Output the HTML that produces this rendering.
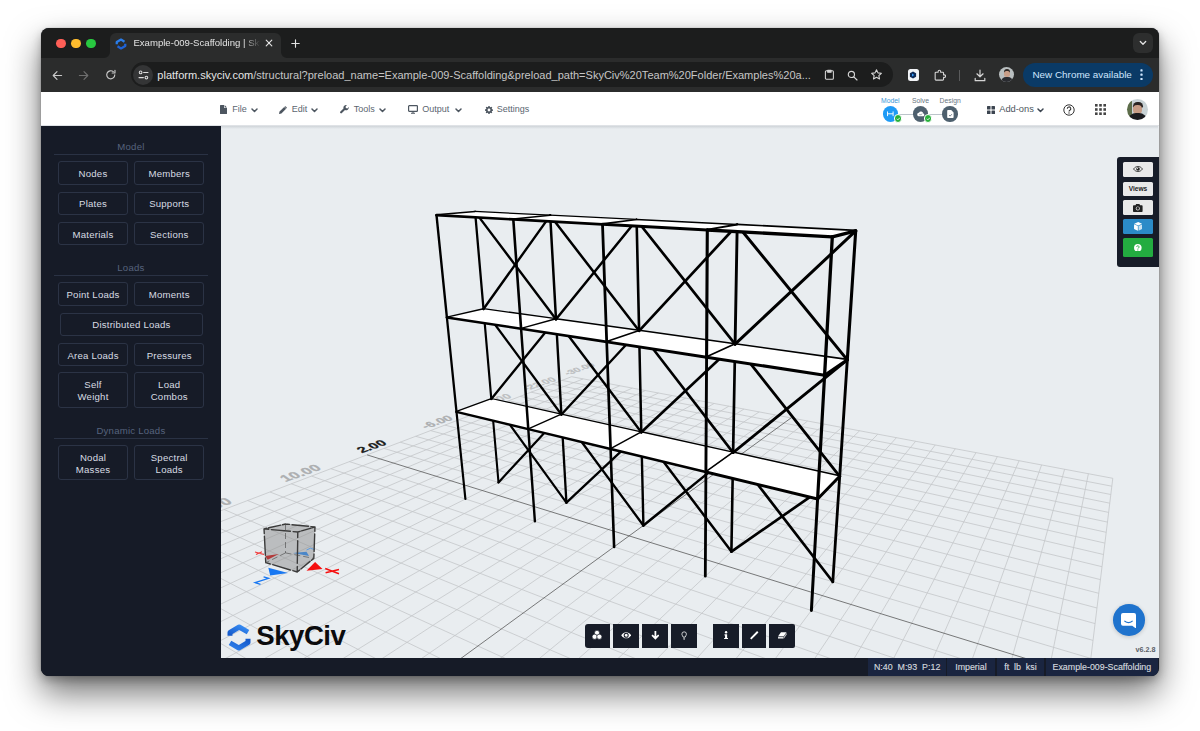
<!DOCTYPE html>
<html lang="en"><head><meta charset="utf-8"><title>Example-009-Scaffolding | SkyCiv</title>
<style>
*{box-sizing:border-box;margin:0;padding:0}
html,body{width:1200px;height:731px;overflow:hidden;background:#fff;font-family:"Liberation Sans",sans-serif}
.abs,.win *{position:absolute}
.shadow{position:absolute;left:41.2px;top:28px;width:1117.4px;height:647.6px;border-radius:8px;
 box-shadow:0 17px 34px 0 rgba(0,0,0,.55),0 4px 10px rgba(0,0,0,.25),0 0 1px rgba(0,0,0,.5)}
.win{position:absolute;left:41.2px;top:28px;width:1117.4px;height:647.6px;border-radius:8px;overflow:hidden;background:#161b27}
.win span,.win div{white-space:nowrap}
/* chrome */
.tabstrip{left:0;top:0;width:100%;height:30px;background:#1c1d1d}
.toolbar{left:0;top:29.5px;width:100%;height:34.5px;background:#2b2c2c}
.tab{left:68.5px;top:5px;width:171px;height:25px;background:#2b2c2c;border-radius:6px 6px 0 0}
.tl{width:9.2px;height:9.2px;border-radius:50%;top:10.9px}
.url{left:89.75px;top:34.3px;width:762px;height:25.2px;border-radius:12.6px;background:#1c1d1d}
.urltxt{left:26.4px;top:5.6px;font-size:11.02px;line-height:14px;color:#e6e6e6;letter-spacing:0}
.urltxt i{font-style:normal;color:#c6c6c6}
.ncp{left:982px;top:35px;width:130.2px;height:23.8px;border-radius:12px;background:#0a3a66}
.ncp span{left:9.3px;top:5.2px;font-size:9.88px;line-height:13px;color:#cfe6ff}
/* app */
.nav{left:0;top:64px;width:100%;height:33.5px;background:#fff;border-bottom:1px solid #dfe2e6}
.mi{top:12px;font-size:9px;line-height:11px;color:#5b6570}
.side{left:0;top:97.5px;width:179.8px;height:550px;background:#161b27}
.sh{left:0;width:179.5px;text-align:center;font-size:9.6px;letter-spacing:.22px;line-height:12px;color:#56637d;margin-top:.9px}
.sl{left:13px;width:153.5px;height:1px;background:#2a3244}
.sb{border:1px solid #2b3345;border-radius:3px;color:#d8dce3;font-size:9.6px;letter-spacing:.22px;line-height:12px;text-align:center;width:70.5px;height:23.6px;padding-top:5.9px}
.sb.c1{left:16.6px}.sb.c2{left:92.8px}
.sb.two{height:35.6px;padding-top:5.8px;white-space:normal!important}
.canvas{left:179.8px;top:97.5px;width:937.6px;height:532px;background:#e9edf0;overflow:hidden}
.status{left:0;top:629.5px;width:100%;height:18px;background:#161b27}
.sbx{top:0;height:18px;background:#1a2540;color:#d3d7de;font-size:8.85px;line-height:18px;text-align:center;-webkit-text-stroke:.15px #d3d7de}
.bb{top:526px;width:25.6px;height:24px;background:#171c28}
.rt{left:896.5px;top:31.5px;width:42px;height:110px;background:#171c28;border-radius:3px 0 0 3px}
.rb{left:5.5px;width:30px;height:14.8px;border-radius:1.5px;background:#e9e9e9}
</style></head><body>
<div class="shadow"></div>
<div class="win">
<div class="tabstrip"></div>
<div class="tab"></div>
<!-- tab curves -->
<svg style="left:62.5px;top:24px" width="6" height="6" viewBox="0 0 6 6"><path d="M6 0V6H0A6 6 0 0 0 6 0Z" fill="#2b2c2c"/></svg>
<svg style="left:239.5px;top:24px" width="6" height="6" viewBox="0 0 6 6"><path d="M0 0V6H6A6 6 0 0 1 0 0Z" fill="#2b2c2c"/></svg>
<div class="toolbar"></div>
<div class="tl" style="left:15.2px;background:#fe5f57"></div>
<div class="tl" style="left:30.2px;background:#febc2e"></div>
<div class="tl" style="left:45.2px;background:#28c840"></div>
<!-- favicon -->
<svg style="left:74px;top:9.5px" width="12" height="12" viewBox="0 0 24 24" fill="none" stroke="#2a7de9" stroke-width="4.6" stroke-linejoin="round"><path d="M3.5 12.5V8.2L12 3.2l7 4.1"/><path d="M20.5 11.5v4.3L12 20.8l-7-4.1" stroke="#1f63d6"/></svg>
<span style="left:92.2px;top:9px;font-size:9.6px;line-height:12px;color:#e3e3e3;width:129px;overflow:hidden;-webkit-mask-image:linear-gradient(90deg,#000 86%,transparent 99%);mask-image:linear-gradient(90deg,#000 86%,transparent 99%)">Example-009-Scaffolding | SkyCiv</span>
<svg style="left:223.7px;top:11.2px" width="8" height="8" viewBox="0 0 8 8" stroke="#e3e3e3" stroke-width="1.15" stroke-linecap="round"><path d="M1.2 1.2l5.6 5.6M6.8 1.2L1.2 6.8"/></svg>
<svg style="left:249.5px;top:10.7px" width="9" height="9" viewBox="0 0 9 9" stroke="#e3e3e3" stroke-width="1.15" stroke-linecap="round"><path d="M4.5 0.8v7.4M0.8 4.5h7.4"/></svg>
<!-- tab search -->
<div style="left:1091.4px;top:4.8px;width:20.9px;height:20.3px;border-radius:6px;background:#2d2e2e"></div>
<svg style="left:1098.1px;top:12.4px" width="8" height="6" viewBox="0 0 8 6" fill="none" stroke="#e3e3e3" stroke-width="1.3" stroke-linecap="round" stroke-linejoin="round"><path d="M1.3 1.5L4 4.2 6.7 1.5"/></svg>
<!-- nav icons -->
<svg style="left:11px;top:41.5px" width="11" height="11" viewBox="0 0 11 11" fill="none" stroke="#c9c9c9" stroke-width="1.15" stroke-linecap="round" stroke-linejoin="round"><path d="M9.6 5.5H1.4M5 1.6L1.2 5.5 5 9.4"/></svg>
<svg style="left:37.2px;top:41.5px" width="11" height="11" viewBox="0 0 11 11" fill="none" stroke="#6f6f6f" stroke-width="1.15" stroke-linecap="round" stroke-linejoin="round"><path d="M1.4 5.5H9.6M6 1.6L9.8 5.5 6 9.4"/></svg>
<svg style="left:64px;top:41.2px" width="11.5" height="11.5" viewBox="0 0 12 12" fill="none" stroke="#c9c9c9" stroke-width="1.2" stroke-linecap="round" stroke-linejoin="round"><path d="M10.2 6a4.2 4.2 0 1 1-1.5-3.2"/><path d="M10.4 1.3v2.9H7.5" /></svg>
<div class="url">
 <div style="left:2.5px;top:2.5px;width:20px;height:20px;border-radius:50%;background:#343536"></div>
 <svg style="left:7px;top:7.5px" width="11" height="10" viewBox="0 0 11 10" fill="none" stroke="#dcdcdc" stroke-width="1.05" stroke-linecap="round"><circle cx="2.6" cy="2.4" r="1.35"/><path d="M5.6 2.4h4.4M1 7.6h4.4"/><circle cx="8.4" cy="7.6" r="1.35"/></svg>
 <span class="urltxt">platform.skyciv.com<i>/structural?preload_name=Example-009-Scaffolding&amp;preload_path=SkyCiv%20Team%20Folder/Examples%20a...</i></span>
 <!-- clipboard -->
 <svg style="left:693px;top:7px" width="10.8" height="11" viewBox="0 0 10 11" fill="none" stroke="#d5d5d5" stroke-width="1.05" stroke-linejoin="round"><rect x="1" y="1.8" width="8" height="8.4" rx="1"/><path d="M3.3 1.2h3.4v2H3.3z" fill="#d5d5d5"/></svg>
 <!-- zoom -->
 <svg style="left:716.5px;top:7.3px" width="11" height="11" viewBox="0 0 11 11" fill="none" stroke="#d5d5d5" stroke-width="1.15" stroke-linecap="round"><circle cx="4.4" cy="4.4" r="3.1"/><path d="M6.8 6.8l3.2 3.2"/></svg>
 <!-- star -->
 <svg style="left:739px;top:6.2px" width="13" height="13" viewBox="0 0 24 24" fill="none" stroke="#d5d5d5" stroke-width="2" stroke-linejoin="round"><path d="M12 3.2l2.7 5.8 6.3.7-4.7 4.3 1.3 6.2L12 17l-5.6 3.2 1.3-6.2L3 9.7l6.3-.7z"/></svg>
</div>
<!-- extension icon -->
<div style="left:866.5px;top:41px;width:11.5px;height:11.5px;border-radius:2.5px;background:#f2f4f7"></div>
<svg style="left:868.2px;top:42.7px" width="8" height="8" viewBox="0 0 8 8"><path d="M4 .4l3.1 1.8v3.6L4 7.6.9 5.8V2.2z" fill="#0d2a57"/><path d="M3 2.5l2.3 1.5-2.3 1.5z" fill="#35a0ff"/></svg>
<!-- puzzle -->
<svg style="left:892px;top:40.5px" width="13" height="13" viewBox="0 0 24 24" fill="none" stroke="#d5d5d5" stroke-width="2" stroke-linejoin="round"><path d="M9.5 4.5a2.3 2.3 0 0 1 4.6 0V6H18a1.5 1.5 0 0 1 1.5 1.5v3.4H21a2.3 2.3 0 0 1 0 4.6h-1.5V19a1.5 1.5 0 0 1-1.5 1.5H5.5A1.5 1.5 0 0 1 4 19V7.5A1.5 1.5 0 0 1 5.5 6h4z"/></svg>
<div style="left:918.2px;top:41.5px;width:1px;height:11px;background:#5a5b5c"></div>
<!-- download -->
<svg style="left:933px;top:40.5px" width="12" height="13" viewBox="0 0 12 13" fill="none" stroke="#d5d5d5" stroke-width="1.2" stroke-linecap="round" stroke-linejoin="round"><path d="M6 1v6.6M2.9 4.8L6 7.8l3.1-3M1.2 9.3v2.4h9.6V9.3"/></svg>
<!-- avatar small -->
<div style="left:958.1px;top:39.2px;width:15px;height:15px;border-radius:50%;overflow:hidden;background:#b9bfc0"><div style="left:4.7px;top:2px;width:6px;height:4px;border-radius:3px 3px 1px 1px;background:#2c2623"></div><div style="left:4.9px;top:3.8px;width:5.5px;height:6px;border-radius:45%;background:#c89e88"></div><div style="left:1.5px;top:9.6px;width:12px;height:7px;border-radius:5px 5px 0 0;background:#2a2b30"></div></div>
<div class="ncp"><span>New Chrome available</span>
<svg style="left:117.1px;top:6.2px" width="3" height="11.4" viewBox="0 0 3 11.4" fill="#cfe6ff"><rect x=".4" y=".3" width="2.2" height="2.2" rx=".6"/><rect x=".4" y="4.6" width="2.2" height="2.2" rx=".6"/><rect x=".4" y="8.9" width="2.2" height="2.2" rx=".6"/></svg></div>

<div class="nav"></div>
<!-- menu: positions relative to win (win left=41.5, top=28) -->
<svg style="left:178.5px;top:77px" width="7" height="9" viewBox="0 0 7 9" fill="#4d5660"><path d="M0 .6A.6.6 0 0 1 .6 0H4v2.6a.5.5 0 0 0 .5.5H7v5.3a.6.6 0 0 1-.6.6H.6A.6.6 0 0 1 0 8.4zM4.6 0L7 2.4H4.6z"/></svg>
<span class="mi" style="left:191px;top:75.5px">File</span>
<svg class="chev" style="left:209.5px;top:79.5px" width="7" height="5" viewBox="0 0 7 5" fill="none" stroke="#4d5660" stroke-width="1.5" stroke-linecap="round" stroke-linejoin="round"><path d="M1 1l2.5 2.5L6 1"/></svg>
<svg style="left:237.5px;top:77.5px" width="8" height="8" viewBox="0 0 8 8" fill="#4d5660"><path d="M0 8l.5-2.4L5.2.9l1.9 1.9L2.4 7.5zM5.8.4a.7.7 0 0 1 1 0l.8.8a.7.7 0 0 1 0 1l-.3.3L5.5.7z"/></svg>
<span class="mi" style="left:250.5px;top:75.5px">Edit</span>
<svg class="chev" style="left:270px;top:79.5px" width="7" height="5" viewBox="0 0 7 5" fill="none" stroke="#4d5660" stroke-width="1.5" stroke-linecap="round" stroke-linejoin="round"><path d="M1 1l2.5 2.5L6 1"/></svg>
<svg style="left:298.5px;top:77px" width="9" height="9" viewBox="0 0 9 9" fill="#4d5660"><path d="M8.7 2.1L7.3 3.5 5.9 3.1 5.5 1.7 6.9.3A2.6 2.6 0 0 0 3.5 3.4L.4 6.5a1.05 1.05 0 0 0 1.5 1.5L5 4.9A2.6 2.6 0 0 0 8.7 2.1z"/></svg>
<span class="mi" style="left:312.5px;top:75.5px">Tools</span>
<svg class="chev" style="left:338px;top:79.5px" width="7" height="5" viewBox="0 0 7 5" fill="none" stroke="#4d5660" stroke-width="1.5" stroke-linecap="round" stroke-linejoin="round"><path d="M1 1l2.5 2.5L6 1"/></svg>
<svg style="left:366.5px;top:77px" width="10" height="9" viewBox="0 0 10 9" fill="none" stroke="#4d5660"><rect x=".6" y=".6" width="8.8" height="5.8" rx=".7" stroke-width="1.2"/><path d="M3 8.3h4M5 6.5v1.7" stroke-width="1.1"/></svg>
<span class="mi" style="left:381px;top:75.5px">Output</span>
<svg class="chev" style="left:414px;top:79.5px" width="7" height="5" viewBox="0 0 7 5" fill="none" stroke="#4d5660" stroke-width="1.5" stroke-linecap="round" stroke-linejoin="round"><path d="M1 1l2.5 2.5L6 1"/></svg>
<svg style="left:443.5px;top:77.5px" width="8" height="8" viewBox="0 0 16 16" fill="#4d5660"><path fill-rule="evenodd" d="M6.7 0h2.6l.4 2.1 1.3.6 1.8-1.2 1.8 1.8-1.2 1.8.6 1.3 2.1.4v2.6l-2.1.4-.6 1.3 1.2 1.8-1.8 1.8-1.8-1.2-1.3.6-.4 2.1H6.7l-.4-2.1-1.3-.6-1.8 1.2-1.8-1.8 1.2-1.8-.6-1.3L0 9.3V6.7l2.1-.4.6-1.3-1.2-1.8 1.8-1.8 1.8 1.2 1.3-.6zM8 5.2a2.8 2.8 0 1 0 0 5.6 2.8 2.8 0 0 0 0-5.6z"/></svg>
<span class="mi" style="left:455.5px;top:75.5px">Settings</span>
<!-- model/solve/design -->
<span style="left:829.2px;top:68px;width:40px;text-align:center;font-size:6.8px;line-height:9px;color:#3a97d8">Model</span>
<span style="left:859.3px;top:68px;width:40px;text-align:center;font-size:6.8px;line-height:9px;color:#69757f">Solve</span>
<span style="left:889px;top:68px;width:40px;text-align:center;font-size:6.8px;line-height:9px;color:#69757f">Design</span>
<div style="left:850px;top:85.9px;width:56px;height:.8px;background:#bcc4ca"></div>
<div style="left:841.55px;top:78.4px;width:15.4px;height:15.4px;border-radius:50%;background:#1e9af5"></div>
<div style="left:871.56px;top:78.4px;width:15.4px;height:15.4px;border-radius:50%;background:#4e606e"></div>
<div style="left:901.3px;top:78.4px;width:15.4px;height:15.4px;border-radius:50%;background:#4e606e"></div>
<svg style="left:844.95px;top:83.3px" width="8.6" height="5.6" viewBox="0 0 8 6" fill="none" stroke="#fff" stroke-width="1"><path d="M1 .5v5M7 .5v5M1 3h6"/></svg>
<svg style="left:874.56px;top:82.7px" width="9.4" height="6.4" viewBox="0 0 17 13" fill="#fff"><path d="M13.7 5A4.5 4.5 0 0 0 5 3.7 3.6 3.6 0 0 0 3.8 10.7h9.5A2.9 2.9 0 0 0 13.7 5z"/><path d="M6.3 6.7l1.7 1.7 3-3" stroke="#4e606e" stroke-width="1.4" fill="none"/></svg>
<svg style="left:905.6px;top:82.1px" width="6.8" height="8" viewBox="0 0 12 15" fill="#fff"><path d="M1.5 0h6L12 4.5v9A1.5 1.5 0 0 1 10.5 15h-9A1.5 1.5 0 0 1 0 13.5v-12A1.5 1.5 0 0 1 1.5 0z"/><path d="M3.5 9.5l2 2 3.2-3.6" stroke="#4e606e" stroke-width="1.5" fill="none"/></svg>
<div style="left:852.7px;top:86.2px;width:8.4px;height:8.4px;border-radius:50%;background:#27b13a;border:.5px solid #fff"></div>
<svg style="left:854.7px;top:88.7px" width="4.6" height="3.7" viewBox="0 0 8 6.4" fill="none" stroke="#fff" stroke-width="1.5"><path d="M1.2 3.3l1.9 1.8L6.8 1.2"/></svg>
<div style="left:882.7px;top:86.2px;width:8.4px;height:8.4px;border-radius:50%;background:#27b13a;border:.5px solid #fff"></div>
<svg style="left:884.7px;top:88.7px" width="4.6" height="3.7" viewBox="0 0 8 6.4" fill="none" stroke="#fff" stroke-width="1.5"><path d="M1.2 3.3l1.9 1.8L6.8 1.2"/></svg>
<!-- add-ons -->
<svg style="left:945.5px;top:77.5px" width="8" height="8" viewBox="0 0 8 8" fill="#3c4550"><rect width="3.5" height="3.5" rx=".5"/><rect x="4.5" width="3.5" height="3.5" rx=".5"/><rect y="4.5" width="3.5" height="3.5" rx=".5"/><rect x="4.5" y="4.5" width="3.5" height="3.5" rx=".5"/></svg>
<span class="mi" style="left:958px;top:75.5px;font-size:9.3px;color:#4d5660">Add-ons</span>
<svg class="chev" style="left:996px;top:79.5px" width="7" height="5" viewBox="0 0 7 5" fill="none" stroke="#3c4550" stroke-width="1.5" stroke-linecap="round" stroke-linejoin="round"><path d="M1 1l2.5 2.5L6 1"/></svg>
<!-- help -->
<svg style="left:1022px;top:75.5px" width="12" height="12" viewBox="0 0 12 12" fill="none"><circle cx="6" cy="6" r="5.2" stroke="#333" stroke-width="1"/><path d="M4.3 4.7a1.75 1.75 0 1 1 2.6 1.5c-.6.4-.9.7-.9 1.3" stroke="#333" stroke-width="1.1"/><circle cx="6" cy="9" r=".7" fill="#333"/></svg>
<!-- apps grid -->
<svg style="left:1053.5px;top:76px" width="11" height="11" viewBox="0 0 11 11" fill="#444"><rect width="2.6" height="2.6"/><rect x="4.2" width="2.6" height="2.6"/><rect x="8.4" width="2.6" height="2.6"/><rect y="4.2" width="2.6" height="2.6"/><rect x="4.2" y="4.2" width="2.6" height="2.6"/><rect x="8.4" y="4.2" width="2.6" height="2.6"/><rect y="8.4" width="2.6" height="2.6"/><rect x="4.2" y="8.4" width="2.6" height="2.6"/><rect x="8.4" y="8.4" width="2.6" height="2.6"/></svg>
<!-- avatar -->
<div style="left:1085.5px;top:71px;width:21px;height:21px;border-radius:50%;overflow:hidden;background:linear-gradient(90deg,#5d6d4a 0 25%,#c9d3d6 25% 100%)"><div style="left:6px;top:2.5px;width:10px;height:6px;border-radius:5px 5px 2px 2px;background:#2a2422"></div><div style="left:6.5px;top:5.5px;width:9px;height:9px;border-radius:45%;background:#c79c85"></div><div style="left:1.5px;top:13.5px;width:19px;height:10px;border-radius:8px 8px 0 0;background:#1b1b1f"></div></div>
<!-- sidebar -->
<div class="side"></div>
<div class="sh" style="top:112.5px">Model</div><div class="sl" style="top:126px"></div>
<div class="sb c1" style="top:133.3px">Nodes</div><div class="sb c2" style="top:133.3px">Members</div>
<div class="sb c1" style="top:163.5px">Plates</div><div class="sb c2" style="top:163.5px">Supports</div>
<div class="sb c1" style="top:193.7px">Materials</div><div class="sb c2" style="top:193.7px">Sections</div>
<div class="sh" style="top:233.3px">Loads</div><div class="sl" style="top:247.2px"></div>
<div class="sb c1" style="top:254.3px">Point Loads</div><div class="sb c2" style="top:254.3px">Moments</div>
<div class="sb" style="left:18.5px;width:143.5px;top:284.5px">Distributed Loads</div>
<div class="sb c1" style="top:314.7px">Area Loads</div><div class="sb c2" style="top:314.7px">Pressures</div>
<div class="sb c1 two" style="top:344.2px">Self<br>Weight</div><div class="sb c2 two" style="top:344.2px">Load<br>Combos</div>
<div class="sh" style="top:396px">Dynamic Loads</div><div class="sl" style="top:410px"></div>
<div class="sb c1 two" style="top:416.8px">Nodal<br>Masses</div><div class="sb c2 two" style="top:416.8px">Spectral<br>Loads</div>
<!-- canvas -->
<div class="canvas">
<svg style="left:0;top:0" width="937" height="532" viewBox="0 0 937 532" font-family="Liberation Sans, sans-serif"><path d="M350.6 250.7L-280.8 492M362.2 252.9L-269.5 501.7M374.1 255.2L-257.8 511.8M386.3 257.4L-245.5 522.4M398.7 259.8L-232.7 533.5M411.3 262.1L-219.3 545M424.2 264.6L-205.3 557.2M437.4 267L-190.6 569.9M450.9 269.6L-175.2 583.2M464.7 272.1L-158.9 597.2M478.7 274.8L-141.9 612M493.1 277.5L-123.9 627.5M507.8 280.2L-104.9 643.9M522.9 283.1L-84.8 661.3M538.2 285.9L-63.6 679.6M554 288.9L-41.1 699.1M586.6 295L8.2 741.7M603.5 298.2L35.3 765.1M620.8 301.4L64.3 790.1M638.6 304.8L95.3 816.9M656.8 308.2L128.5 845.7M675.4 311.7L164.4 876.6M694.6 315.3L203 910M714.2 319L244.8 946.2M734.3 322.7L290.3 985.4M755 326.6L339.8 1028.2M776.3 330.6L393.9 1075M798.1 334.7L453.4 1126.4M820.6 338.9L519.1 1183.2M843.6 343.2L592 1246.1M867.4 347.7L673.3 1316.4M891.8 352.3L764.6 1395.3M350.6 250.7L891.8 352.3M341 254.4L890.8 360.2M331.1 258.2L889.8 368.5M320.8 262.1L888.8 377.2M310.1 266.2L887.6 386.4M299.1 270.4L886.5 396.1M287.7 274.8L885.2 406.3M275.9 279.3L883.9 417.1M263.7 284L882.5 428.5M250.9 288.8L881 440.7M237.7 293.9L879.4 453.6M223.9 299.1L877.8 467.3M209.6 304.6L876 482M194.7 310.3L874.1 497.6M179.2 316.2L872 514.4M163 322.4L869.8 532.4M128.4 335.6L864.9 572.9M109.9 342.7L862.1 595.6M90.6 350.1L859.1 620.3M70.3 357.8L855.8 647.3M49 366L852.2 676.9M26.6 374.5L848.2 709.4M3.1 383.5L843.9 745.4M-21.7 393L839 785.3M-47.9 403L833.5 830M-75.5 413.5L827.4 880.4M-104.8 424.7L820.4 937.4M-135.7 436.6L812.5 1002.7M-168.6 449.1L803.3 1078M-203.6 462.5L792.5 1166.1M-240.9 476.7L779.8 1270.2M-280.8 492L764.6 1395.3" stroke="#c4c6c9" stroke-width="0.8" fill="none"/><path d="M570.1 291.9L-17.2 719.7M146.1 328.9L867.5 551.9" stroke="#505050" stroke-width="0.75" fill="none"/><text transform="matrix(0.99 -0.349 0.708 0.504 346.771 249.586)" font-size="10" font-weight="700" fill="#bcbec0" stroke="#bcbec0" stroke-width=".25">-30.00</text><text transform="matrix(1.059 -0.373 0.758 0.539 306.062 264.957)" font-size="10" font-weight="700" fill="#bcbec0" stroke="#bcbec0" stroke-width=".25">-22.00</text><text transform="matrix(1.138 -0.401 0.814 0.58 259.258 282.63)" font-size="10" font-weight="700" fill="#bcbec0" stroke="#bcbec0" stroke-width=".25">-14.00</text><text transform="matrix(1.23 -0.433 0.88 0.627 204.879 303.162)" font-size="10" font-weight="700" fill="#adafb1" stroke="#adafb1" stroke-width=".25">-6.00</text><text transform="matrix(1.338 -0.472 0.958 0.682 140.925 327.311)" font-size="10" font-weight="700" fill="#1c1c1c" stroke="#1c1c1c" stroke-width=".25">2.00</text><text transform="matrix(1.468 -0.517 1.05 0.748 64.621 356.122)" font-size="10" font-weight="700" fill="#adafb1" stroke="#adafb1" stroke-width=".25">10.00</text><text transform="matrix(1.625 -0.572 1.163 0.827 -27.99 391.09)" font-size="10" font-weight="700" fill="#adafb1" stroke="#adafb1" stroke-width=".25">18.00</text><g stroke="#000" stroke-linecap="round"><line x1="277.5" y1="356.4" x2="270.3" y2="273" stroke-width="2.1"/><line x1="345.4" y1="376.6" x2="340.4" y2="288.5" stroke-width="2.3"/><line x1="422.4" y1="399.5" x2="420.3" y2="306.3" stroke-width="2.4"/><line x1="510.4" y1="425.6" x2="512.1" y2="326.6" stroke-width="2.6"/><line x1="611.8" y1="455.8" x2="618.7" y2="350.3" stroke-width="2.8"/><line x1="277.5" y1="356.4" x2="340.4" y2="288.5" stroke-width="2.2"/><line x1="345.4" y1="376.6" x2="270.3" y2="273" stroke-width="2.2"/><line x1="345.4" y1="376.6" x2="420.3" y2="306.3" stroke-width="2.3"/><line x1="422.4" y1="399.5" x2="340.4" y2="288.5" stroke-width="2.3"/><line x1="422.4" y1="399.5" x2="512.1" y2="326.6" stroke-width="2.5"/><line x1="510.4" y1="425.6" x2="420.3" y2="306.3" stroke-width="2.5"/><line x1="510.4" y1="425.6" x2="618.7" y2="350.3" stroke-width="2.7"/><line x1="611.8" y1="455.8" x2="512.1" y2="326.6" stroke-width="2.7"/><polygon points="235.5,285.8 307.3,303.1 340.4,288.5 270.3,273" fill="#fff" stroke="none"/><polygon points="307.3,303.1 389.6,323 420.3,306.3 340.4,288.5" fill="#fff" stroke="none"/><polygon points="389.6,323 484.9,346 512.1,326.6 420.3,306.3" fill="#fff" stroke="none"/><polygon points="484.9,346 596.6,373 618.7,350.3 512.1,326.6" fill="#fff" stroke="none"/><line x1="270.3" y1="272.5" x2="340.4" y2="288.1" stroke-width="1.2"/><line x1="340.4" y1="288.1" x2="420.3" y2="305.8" stroke-width="1.3"/><line x1="420.3" y1="305.8" x2="512.1" y2="326.1" stroke-width="1.4"/><line x1="512.1" y1="326.1" x2="618.7" y2="349.8" stroke-width="1.5"/><line x1="235.5" y1="285.4" x2="270.3" y2="272.6" stroke-width="1.3"/><line x1="307.3" y1="302.8" x2="340.4" y2="288.2" stroke-width="1.4"/><line x1="389.6" y1="322.6" x2="420.3" y2="305.9" stroke-width="1.5"/><line x1="484.9" y1="345.6" x2="512.1" y2="326.2" stroke-width="1.6"/><line x1="596.6" y1="373" x2="618.7" y2="350.3" stroke-width="3"/><line x1="235.5" y1="285.8" x2="307.3" y2="303.1" stroke-width="2.4"/><line x1="307.3" y1="303.1" x2="389.6" y2="323" stroke-width="2.5"/><line x1="389.6" y1="323" x2="484.9" y2="346" stroke-width="2.7"/><line x1="484.9" y1="346" x2="596.6" y2="373" stroke-width="2.9"/><line x1="270.3" y1="273" x2="262.5" y2="183" stroke-width="2.2"/><line x1="340.4" y1="288.5" x2="335" y2="193.2" stroke-width="2.4"/><line x1="420.3" y1="306.3" x2="418.1" y2="204.8" stroke-width="2.5"/><line x1="512.1" y1="326.6" x2="514.1" y2="218.2" stroke-width="2.7"/><line x1="618.7" y1="350.3" x2="626.3" y2="233.9" stroke-width="2.9"/><line x1="270.3" y1="273" x2="335" y2="193.2" stroke-width="2.3"/><line x1="340.4" y1="288.5" x2="262.5" y2="183" stroke-width="2.3"/><line x1="340.4" y1="288.5" x2="418.1" y2="204.8" stroke-width="2.4"/><line x1="420.3" y1="306.3" x2="335" y2="193.2" stroke-width="2.4"/><line x1="420.3" y1="306.3" x2="514.1" y2="218.2" stroke-width="2.6"/><line x1="512.1" y1="326.6" x2="418.1" y2="204.8" stroke-width="2.6"/><line x1="512.1" y1="326.6" x2="626.3" y2="233.9" stroke-width="2.8"/><line x1="618.7" y1="350.3" x2="514.1" y2="218.2" stroke-width="2.8"/><polygon points="225.9,191.5 300.1,202.8 335,193.2 262.5,183" fill="#fff" stroke="none"/><polygon points="300.1,202.8 385.7,215.9 418.1,204.8 335,193.2" fill="#fff" stroke="none"/><polygon points="385.7,215.9 485.6,231.2 514.1,218.2 418.1,204.8" fill="#fff" stroke="none"/><polygon points="485.6,231.2 603.6,249.2 626.3,233.9 514.1,218.2" fill="#fff" stroke="none"/><line x1="262.5" y1="182.6" x2="335" y2="192.7" stroke-width="1.3"/><line x1="335" y1="192.7" x2="418.1" y2="204.3" stroke-width="1.4"/><line x1="418.1" y1="204.3" x2="514.1" y2="217.7" stroke-width="1.5"/><line x1="514.1" y1="217.7" x2="626.3" y2="233.4" stroke-width="1.6"/><line x1="225.9" y1="191.1" x2="262.5" y2="182.7" stroke-width="1.4"/><line x1="300.1" y1="202.4" x2="335" y2="192.8" stroke-width="1.5"/><line x1="385.7" y1="215.5" x2="418.1" y2="204.4" stroke-width="1.6"/><line x1="485.6" y1="230.7" x2="514.1" y2="217.8" stroke-width="1.7"/><line x1="603.6" y1="249.2" x2="626.3" y2="233.9" stroke-width="3.1"/><line x1="225.9" y1="191.5" x2="300.1" y2="202.8" stroke-width="2.5"/><line x1="300.1" y1="202.8" x2="385.7" y2="215.9" stroke-width="2.6"/><line x1="385.7" y1="215.9" x2="485.6" y2="231.2" stroke-width="2.9"/><line x1="485.6" y1="231.2" x2="603.6" y2="249.2" stroke-width="3.1"/><line x1="262.5" y1="183" x2="254.1" y2="85.9" stroke-width="2.3"/><line x1="335" y1="193.2" x2="329.2" y2="89.6" stroke-width="2.5"/><line x1="418.1" y1="204.8" x2="415.6" y2="94" stroke-width="2.6"/><line x1="514.1" y1="218.2" x2="516.2" y2="99" stroke-width="2.9"/><line x1="626.3" y1="233.9" x2="634.7" y2="104.9" stroke-width="3.1"/><line x1="262.5" y1="183" x2="329.2" y2="89.6" stroke-width="2.4"/><line x1="335" y1="193.2" x2="254.1" y2="85.9" stroke-width="2.4"/><line x1="335" y1="193.2" x2="415.6" y2="94" stroke-width="2.5"/><line x1="418.1" y1="204.8" x2="329.2" y2="89.6" stroke-width="2.5"/><line x1="418.1" y1="204.8" x2="516.2" y2="99" stroke-width="2.7"/><line x1="514.1" y1="218.2" x2="415.6" y2="94" stroke-width="2.7"/><line x1="514.1" y1="218.2" x2="634.7" y2="104.9" stroke-width="3"/><line x1="626.3" y1="233.9" x2="516.2" y2="99" stroke-width="3"/><polygon points="215.5,89.1 292.3,93.4 329.2,89.6 254.1,85.9" fill="#fff" stroke="none"/><polygon points="292.3,93.4 381.5,98.3 415.6,94 329.2,89.6" fill="#fff" stroke="none"/><polygon points="381.5,98.3 486.3,104 516.2,99 415.6,94" fill="#fff" stroke="none"/><polygon points="486.3,104 611.3,110.9 634.7,104.9 516.2,99" fill="#fff" stroke="none"/><line x1="254.1" y1="85.4" x2="329.2" y2="89.2" stroke-width="1.3"/><line x1="329.2" y1="89.1" x2="415.6" y2="93.4" stroke-width="1.4"/><line x1="415.6" y1="93.4" x2="516.2" y2="98.4" stroke-width="1.5"/><line x1="516.2" y1="98.4" x2="634.7" y2="104.3" stroke-width="1.7"/><line x1="215.5" y1="88.8" x2="254.1" y2="85.5" stroke-width="1.4"/><line x1="292.3" y1="93" x2="329.2" y2="89.3" stroke-width="1.6"/><line x1="381.5" y1="97.9" x2="415.6" y2="93.5" stroke-width="1.7"/><line x1="486.3" y1="103.6" x2="516.2" y2="98.5" stroke-width="1.8"/><line x1="611.3" y1="110.9" x2="634.7" y2="104.9" stroke-width="3.3"/><line x1="215.5" y1="89.1" x2="292.3" y2="93.4" stroke-width="2.6"/><line x1="292.3" y1="93.4" x2="381.5" y2="98.3" stroke-width="2.8"/><line x1="381.5" y1="98.3" x2="486.3" y2="104" stroke-width="3"/><line x1="486.3" y1="104" x2="611.3" y2="110.9" stroke-width="3.3"/><line x1="244.4" y1="373" x2="235.5" y2="285.8" stroke-width="2.2"/><line x1="313.9" y1="395.4" x2="307.3" y2="303.1" stroke-width="2.4"/><line x1="393.1" y1="420.9" x2="389.6" y2="323" stroke-width="2.6"/><line x1="484.3" y1="450.2" x2="484.9" y2="346" stroke-width="2.8"/><line x1="590.4" y1="484.4" x2="596.6" y2="373" stroke-width="3"/><line x1="235.5" y1="285.8" x2="225.9" y2="191.5" stroke-width="2.3"/><line x1="307.3" y1="303.1" x2="300.1" y2="202.8" stroke-width="2.5"/><line x1="389.6" y1="323" x2="385.7" y2="215.9" stroke-width="2.7"/><line x1="484.9" y1="346" x2="485.6" y2="231.2" stroke-width="2.9"/><line x1="596.6" y1="373" x2="603.6" y2="249.2" stroke-width="3.2"/><line x1="225.9" y1="191.5" x2="215.5" y2="89.1" stroke-width="2.4"/><line x1="300.1" y1="202.8" x2="292.3" y2="93.4" stroke-width="2.6"/><line x1="385.7" y1="215.9" x2="381.5" y2="98.3" stroke-width="2.8"/><line x1="485.6" y1="231.2" x2="486.3" y2="104" stroke-width="3.1"/><line x1="603.6" y1="249.2" x2="611.3" y2="110.9" stroke-width="3.3"/></g><g transform="translate(-221 -125.5)">
<g fill="#8e8e8e" fill-opacity=".5" stroke="none">
<polygon points="264,528.4 285.5,523.5 315,526.5 297.8,531.5"/>
<polygon points="264,528.4 297.8,531.5 297.2,571.5 265.8,562.2"/>
<polygon points="297.8,531.5 315,526.5 313.8,557.9 297.2,571.5"/>
</g>
<polygon points="265.2,555.5 278.8,553.6 267.7,559.2" fill="#b23a3a"/>
<polygon points="293,552.4 306.5,551.2 309,555.5" fill="#4a86c8"/>
<path d="M306.5 549.5l4-1.8 1.5.6 3 .8" stroke="#5b9be0" stroke-width="1" fill="none"/>
<path d="M255 551.5l9 2.5M256 554l6-2.8" stroke="#f03a3a" stroke-width="1.1" fill="none"/>
<path d="M264 528.4L268.7 528.8M271.4 529.1L290.4 530.8M293.1 531.1L297.8 531.5M297.8 531.5L300.2 530.8M301.6 530.4L311.2 527.6M312.6 527.2L315 526.5M264 528.4L267 527.7M268.7 527.3L280.8 524.6M282.5 524.2L285.5 523.5M285.5 523.5L289.6 523.9M292 524.2L308.5 525.8M310.9 526.1L315 526.5M264 528.4L264.3 533.1M264.4 535.8L265.4 554.8M265.5 557.5L265.8 562.2M297.8 531.5L297.7 537.1M297.7 540.3L297.3 562.7M297.3 565.9L297.2 571.5M315 526.5L314.8 530.9M314.7 533.4L314.1 551M314 553.5L313.8 557.9M265.8 562.2L270.2 563.5M272.7 564.2L290.3 569.5M292.8 570.2L297.2 571.5M297.2 571.5L299.5 569.6M300.9 568.5L310.1 560.9M311.5 559.8L313.8 557.9" fill="none" stroke="#3a3a3a" stroke-width="1.4" stroke-linecap="round"/>
<g fill="none" stroke="#4a4a4a" stroke-width=".8" stroke-dasharray="6 3" opacity=".8">
<path d="M285.5 523.5V552.4M285.5 552.4L265.8 562.2M285.5 552.4L313.8 557.9"/>
</g>
<polygon points="306.5,570.2 315.1,561.6 322.5,568.4" fill="#f50f0f"/>
<polygon points="268.3,567.2 288,572.4 270.2,574.9" fill="#1777f2"/>
<path d="M325.2 568l13.8 5.2M325.6 572.2l13.4-3.2" stroke="#f50f0f" stroke-width="1.5" fill="none"/>
<path d="M254.8 581.8l6.5-2.7-5.4 3.9 5.4 1.1" stroke="#1777f2" stroke-width="0" fill="none"/>
<path d="M263.6 576.3l5 1.5-13.5 4.3 5.4 1.7" stroke="#1777f2" stroke-width="1.3" fill="none" stroke-linejoin="miter"/>
</g></svg>
<!-- logo -->
<svg style="left:6.5px;top:498.5px" width="24" height="27" viewBox="0 0 24 27" fill="none" stroke-linejoin="round" stroke-linecap="butt"><defs><linearGradient id="lg1" x1="0" y1="1" x2="1" y2="0"><stop offset="0" stop-color="#1257c9"/><stop offset="1" stop-color="#3a8ff5"/></linearGradient><linearGradient id="lg2" x1="1" y1="0" x2="0" y2="1"><stop offset="0" stop-color="#1257c9"/><stop offset="1" stop-color="#2f7fea"/></linearGradient></defs><path d="M3 11.8V8.5L12.2 3l8.8 5.2" stroke="url(#lg1)" stroke-width="5"/><path d="M21 14.8v3.7L11.8 24 3 18.8" stroke="url(#lg2)" stroke-width="5"/></svg>
<span style="left:35.3px;top:493px;font-size:27.6px;line-height:34px;font-weight:700;color:#0b0b0d;letter-spacing:-.5px">SkyCiv</span>
<!-- bottom buttons -->
<div class="bb" style="left:363.6px;top:498.3px;width:25.3px;border-radius:3px 0 0 3px"></div>
<div class="bb" style="left:392px;top:498.3px;width:25.8px"></div>
<div class="bb" style="left:421.1px;top:498.3px;width:25.9px"></div>
<div class="bb" style="left:449.8px;top:498.3px;width:25.9px"></div>
<div class="bb" style="left:492px;top:498.3px;width:26.3px"></div>
<div class="bb" style="left:521.1px;top:498.3px;width:24px"></div>
<div class="bb" style="left:548.2px;top:498.3px;width:26.2px;border-radius:0 2px 2px 0"></div>
<!-- icons for bottom buttons -->
<svg style="left:370.3px;top:504.7px" width="12" height="10" viewBox="0 0 12 11" fill="#fff" stroke="#171c28" stroke-width=".7"><circle cx="6" cy="3.2" r="2.8"/><circle cx="3.4" cy="7.4" r="2.8"/><circle cx="8.6" cy="7.4" r="2.8"/></svg>
<svg style="left:399.6px;top:506.7px" width="10.4" height="6.6" viewBox="0 0 22 14"><path d="M.5 7C3.5 2.3 7 .5 11 .5S18.5 2.3 21.5 7C18.5 11.7 15 13.5 11 13.5S3.5 11.7.5 7z" fill="#fff"/><circle cx="11" cy="7" r="4.3" fill="none" stroke="#171c28" stroke-width="2.2"/></svg>
<svg style="left:429.6px;top:505.7px" width="8.8" height="8.8" viewBox="0 0 9 9.5" fill="none" stroke="#fff" stroke-width="1.9" stroke-linecap="butt" stroke-linejoin="miter"><path d="M4.5 0v7.5M.9 4.4l3.6 3.6 3.6-3.6"/></svg>
<svg style="left:459.7px;top:505.7px" width="6.3" height="8.8" viewBox="0 0 14 21" fill="none" stroke="#fff" stroke-width="1.8"><path d="M4.5 14.5c0-2-3-3.5-3-7a5.5 5.5 0 0 1 11 0c0 3.5-3 5-3 7z"/><path d="M4.8 17.2h4.4M5.3 19.8h3.4" stroke-width="1.6"/></svg>
<svg style="left:502.8px;top:505.5px" width="4.2" height="8.4" viewBox="0 0 5 10.5" fill="#fff"><circle cx="2.5" cy="1.5" r="1.5"/><path d="M.5 4h3.3v4.8H5v1.7H0V8.8h1.2V5.6H.5z"/></svg>
<svg style="left:529.1px;top:505.8px" width="8.5" height="8.6" viewBox="0 0 9.5 9.5" fill="none" stroke="#fff" stroke-width="2.1" stroke-linecap="butt"><path d="M.8 8.7L8.7.8"/></svg>
<svg style="left:556.1px;top:506.3px" width="10.2" height="7" viewBox="0 0 12 8.5" fill="#fff"><path d="M4.6.4h6.8L8 5.2H1.2z"/><path d="M1 5.8h6.8v2.2H1z" opacity=".85"/><path d="M8.3 5.6L11.6.9v2.2L8.3 7.8z" opacity=".7"/></svg>
<!-- right toolbar -->
<div class="rt">
<div class="rb" style="top:4.9px"></div>
<div class="rb" style="top:24.6px;height:14px;font-size:6.6px;line-height:14px;font-weight:700;color:#222;text-align:center">Views</div>
<div class="rb" style="top:43px"></div>
<div class="rb" style="top:62px;background:#2b8bc8"></div>
<div class="rb" style="top:80.7px;height:19.7px;background:#23ac40"></div>
<svg style="left:15.5px;top:9.3px" width="10" height="6" viewBox="0 0 20 12" fill="none"><path d="M1 6C4 2 7 1 10 1s6 1 9 5c-3 4-6 5-9 5S4 10 1 6z" stroke="#222" stroke-width="1.6"/><circle cx="10" cy="6" r="3.6" fill="#222"/><circle cx="8.8" cy="4.8" r="1.1" fill="#e9e9e9"/></svg>
<svg style="left:15.7px;top:46.6px" width="9.6" height="8" viewBox="0 0 12 10" fill="#222"><path d="M4 0h4l.9 1.5H11a1 1 0 0 1 1 1V9a1 1 0 0 1-1 1H1a1 1 0 0 1-1-1V2.5a1 1 0 0 1 1-1h2.1z"/><circle cx="6" cy="5.5" r="2.5" fill="#e9e9e9"/><circle cx="6" cy="5.5" r="1.6" fill="#222"/></svg>
<svg style="left:16.3px;top:65.2px" width="8.4" height="8.8" viewBox="0 0 17 18" fill="#fff"><path d="M8.5 0l8 3.5-8 3.5-8-3.5z"/><path d="M0 4.8l7.8 3.4V18L0 14.2z"/><path d="M17 4.8L9.2 8.2V18l7.8-3.8z" opacity=".75"/></svg>
<svg style="left:16.6px;top:86.8px" width="7.6" height="7.6" viewBox="0 0 16 16"><circle cx="8" cy="8" r="8" fill="#fff"/><path d="M5.6 6.2a2.5 2.5 0 1 1 3.7 2.2c-.8.5-1.2.9-1.2 1.7" stroke="#23ac40" stroke-width="1.9" fill="none"/><circle cx="8.1" cy="12.4" r="1.1" fill="#23ac40"/></svg>
</div>
<!-- chat -->
<div style="left:892.1px;top:478.8px;width:31.6px;height:31.6px;border-radius:50%;background:#1f73cd;box-shadow:0 1px 4px rgba(0,0,0,.18)"></div>
<svg style="left:900.4px;top:487px" width="15" height="15.5" viewBox="0 0 15 15.5"><path d="M2 0h11a2 2 0 0 1 2 2v13.5l-3.8-2.7H2a2 2 0 0 1-2-2V2a2 2 0 0 1 2-2z" fill="#fff"/><path d="M3.8 8.2c2.3 1.7 5.1 1.7 7.4 0" stroke="#1f73cd" stroke-width="1.1" fill="none" stroke-linecap="round"/></svg>
<span style="left:880px;top:519.3px;width:54.4px;text-align:right;font-size:7.2px;line-height:10px;font-weight:700;color:#5a6068">v6.2.8</span>

</div>
<div style="left:179.5px;top:97.5px;width:937px;height:3px;background:linear-gradient(#cfd4d9,rgba(233,237,240,0))"></div>
<!-- status -->
<div class="status">
<div class="sbx" style="left:827.2px;width:77.5px">N:40&nbsp; M:93&nbsp; P:12</div>
<div class="sbx" style="left:906px;width:47.5px">Imperial</div>
<div class="sbx" style="left:955.5px;width:47.5px">ft&nbsp; lb&nbsp; ksi</div>
<div class="sbx" style="left:1004.7px;width:112px">Example-009-Scaffolding</div>
</div>

</div>
</body></html>
